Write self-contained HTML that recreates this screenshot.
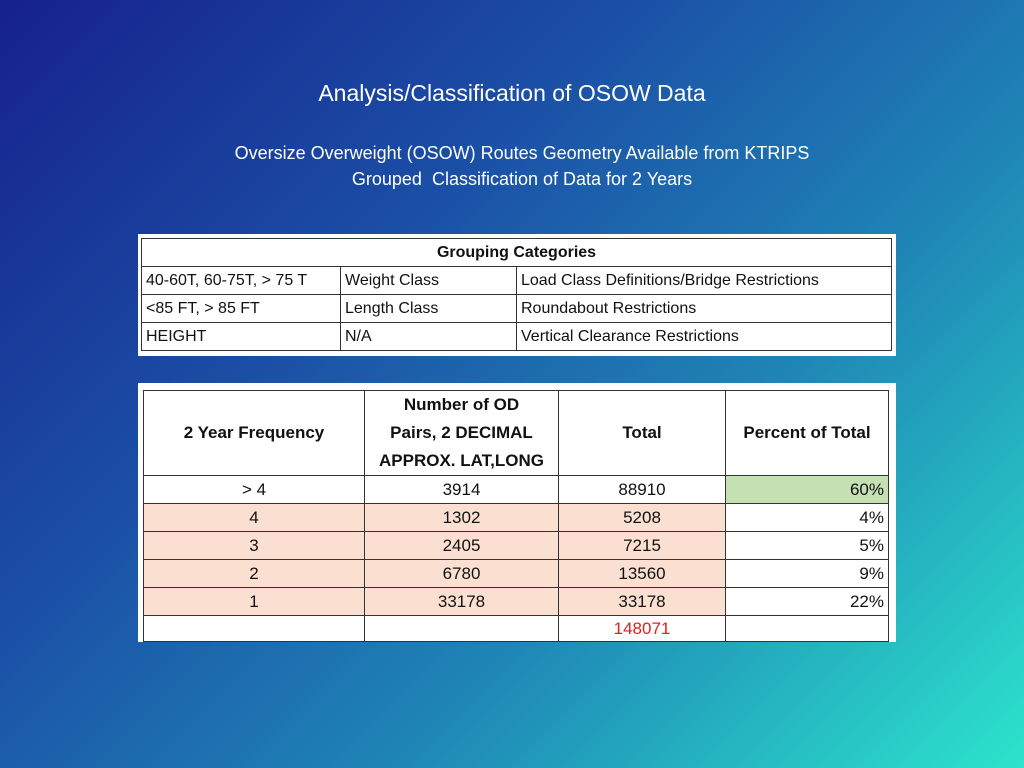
<!DOCTYPE html>
<html><head><meta charset="utf-8"><style>
*{margin:0;padding:0;box-sizing:border-box}
body{width:1024px;height:768px;overflow:hidden;position:relative;font-family:"Liberation Sans",sans-serif;
background:linear-gradient(135deg,#16218c 0%,#1b4fa6 35%,#1f86b6 65%,#2ce4cc 100%);}
.t{position:absolute;color:#fff;text-align:center;width:1024px;left:0}
.box{position:absolute;background:#fff}
table{border-collapse:collapse;position:absolute;font-size:16px;color:#111}
td{border:1.5px solid #333;padding:0 4px;white-space:nowrap;overflow:hidden}
.b{font-weight:bold}
.c{text-align:center}.r{text-align:right}
.p{background:#fbe0d2}.g{background:#c5e0b3}
</style></head><body>
<div class="t" style="top:80px;font-size:23px;left:0">Analysis/Classification of OSOW Data</div>
<div class="t" style="top:143px;font-size:18px;left:10px">Oversize Overweight (OSOW) Routes Geometry Available from KTRIPS</div>
<div class="t" style="top:169px;font-size:18px;left:10px">Grouped&nbsp; Classification of Data for 2 Years</div>

<div class="box" style="left:138px;top:234px;width:758px;height:122px"></div>
<table style="left:141px;top:238px;width:751px">
<tr style="height:28px"><td colspan="3" class="c b">Grouping Categories</td></tr>
<tr style="height:28px"><td style="width:199px">40-60T, 60-75T, &gt; 75 T</td><td style="width:176px">Weight Class</td><td>Load Class Definitions/Bridge Restrictions</td></tr>
<tr style="height:28px"><td>&lt;85 FT, &gt; 85 FT</td><td>Length Class</td><td>Roundabout Restrictions</td></tr>
<tr style="height:28px"><td>HEIGHT</td><td>N/A</td><td>Vertical Clearance Restrictions</td></tr>
</table>

<div class="box" style="left:138px;top:383px;width:758px;height:259px"></div>
<table style="left:143px;top:390px;width:746px;font-size:17px">
<tr style="height:84px"><td class="c b" style="width:221px">2 Year Frequency</td><td class="c b" style="width:194px;line-height:28px">Number of OD<br>Pairs, 2 DECIMAL<br>APPROX. LAT,LONG</td><td class="c b" style="width:167px">Total</td><td class="c b">Percent of Total</td></tr>
<tr style="height:28px"><td class="c">&gt; 4</td><td class="c">3914</td><td class="c">88910</td><td class="r g">60%</td></tr>
<tr style="height:28px"><td class="c p">4</td><td class="c p">1302</td><td class="c p">5208</td><td class="r">4%</td></tr>
<tr style="height:28px"><td class="c p">3</td><td class="c p">2405</td><td class="c p">7215</td><td class="r">5%</td></tr>
<tr style="height:28px"><td class="c p">2</td><td class="c p">6780</td><td class="c p">13560</td><td class="r">9%</td></tr>
<tr style="height:28px"><td class="c p">1</td><td class="c p">33178</td><td class="c p">33178</td><td class="r">22%</td></tr>
<tr style="height:26px"><td></td><td></td><td class="c" style="color:#e02020">148071</td><td></td></tr>
</table>
</body></html>
